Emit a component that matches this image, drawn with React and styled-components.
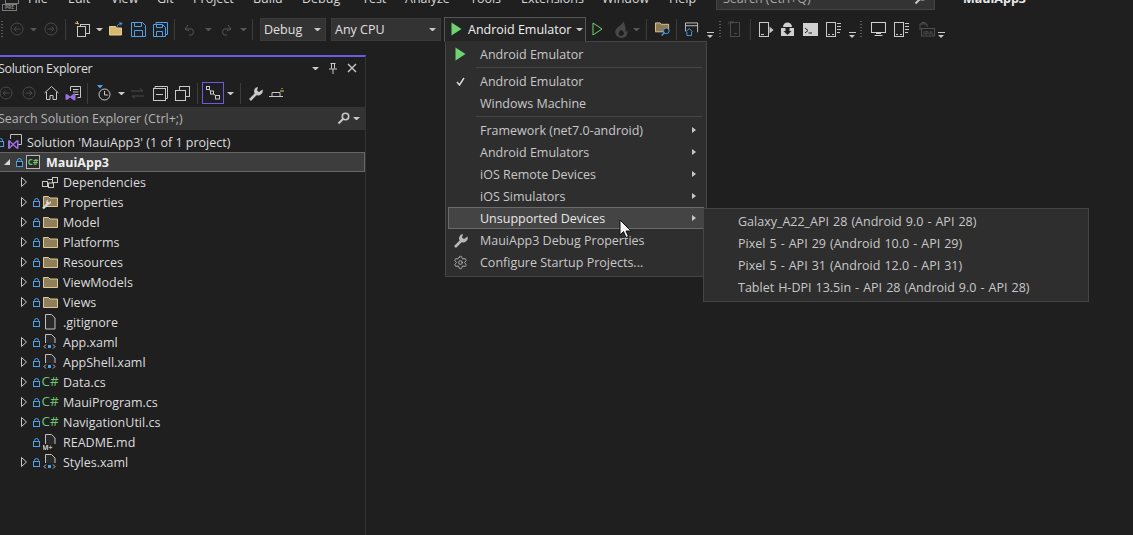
import React from "react";
import styled, { createGlobalStyle } from "styled-components";
import { Settings } from "lucide-react";

const GlobalStyle = createGlobalStyle`
  html, body { margin: 0; padding: 0; background: #1f1f1f; }
  * { box-sizing: border-box; }
`;

const FONT = `"Open Sans", "Noto Sans", sans-serif`;

const menus = [
  ["File", 40], ["Edit", 43], ["View", 46], ["Git", 36], ["Project", 60], ["Build", 49], ["Debug", 60],
  ["Test", 43], ["Analyze", 65], ["Tools", 51], ["Extensions", 81], ["Window", 67], ["Help", 48],
];

const tree = [
  { name: "Dependencies", icon: "deps", arrow: true, lock: false },
  { name: "Properties", icon: "propfolder", arrow: true, lock: true },
  { name: "Model", icon: "folder", arrow: true, lock: true },
  { name: "Platforms", icon: "folder", arrow: true, lock: true },
  { name: "Resources", icon: "folder", arrow: true, lock: true },
  { name: "ViewModels", icon: "folder", arrow: true, lock: true },
  { name: "Views", icon: "folder", arrow: true, lock: true },
  { name: ".gitignore", icon: "file", arrow: false, lock: true },
  { name: "App.xaml", icon: "xaml", arrow: true, lock: true },
  { name: "AppShell.xaml", icon: "xaml", arrow: true, lock: true },
  { name: "Data.cs", icon: "cs", arrow: true, lock: true },
  { name: "MauiProgram.cs", icon: "cs", arrow: true, lock: true },
  { name: "NavigationUtil.cs", icon: "cs", arrow: true, lock: true },
  { name: "README.md", icon: "md", arrow: false, lock: true },
  { name: "Styles.xaml", icon: "xaml", arrow: true, lock: true },
];

const devices = [
  "Galaxy_A22_API 28 (Android 9.0 - API 28)",
  "Pixel 5 - API 29 (Android 10.0 - API 29)",
  "Pixel 5 - API 31 (Android 12.0 - API 31)",
  "Tablet H-DPI 13.5in - API 28 (Android 9.0 - API 28)",
];

const Page = styled.div`
  position: relative;
  width: 1133px;
  height: 535px;
  overflow: hidden;
  background: #1f1f1f;
  font-family: ${FONT};
  font-size: 12.5px;
  color: #dcdcdc;
`;

const MenuBar = styled.div`
  display: flex;
  align-items: center;
  height: 24px;
  margin-top: -14px;
`;

const Logo = styled.div`
  width: 28px;
  flex: none;
  align-self: flex-end;
  padding-left: 2px;
  margin-bottom: -1px;
  &::before {
    content: "";
    display: block;
    width: 12px;
    height: 4px;
    margin-left: 3px;
    border: 1px solid #7a7a7a;
    border-top: none;
  }
`;

const PreBadge = styled.div`
  width: 15px;
  height: 7px;
  border: 1px solid #7a7a7a;
  font-size: 5px;
  line-height: 5px;
  font-weight: 700;
  text-align: center;
  color: #8a8a8a;
`;

const MenuName = styled.div`
  width: ${(p) => p.$w}px;
  flex: none;
  color: #d8d8d8;
`;

const QuickSearch = styled.div`
  display: flex;
  align-items: center;
  justify-content: space-between;
  width: 219px;
  height: 23px;
  margin-left: -1px;
  padding: 0 7px 0 6px;
  background: #333333;
  border: 1px solid #434343;
  color: #a8a8a8;
  flex: none;
`;

const ProjectName = styled.div`
  margin-left: 28px;
  font-weight: 700;
  color: #e8e8e8;
`;

const Toolbar = styled.div`
  display: flex;
  align-items: center;
  height: 26px;
  margin-top: 6px;
  padding-left: 1px;
`;

const Slot = styled.div`
  display: flex;
  align-items: center;
  justify-content: center;
  flex: none;
  width: ${(p) => p.$w}px;
  margin-left: ${(p) => p.$ml || 0}px;
`;

const Sep = styled.div`
  flex: none;
  width: 1px;
  height: 21px;
  background: #3c3c3c;
  margin-left: ${(p) => p.$ml || 0}px;
`;

const Gripper = styled.div`
  flex: none;
  width: 2px;
  height: 17px;
  margin-left: ${(p) => p.$ml || 0}px;
  background: repeating-linear-gradient(to bottom, #5a5a5a 0 1px, transparent 1px 3px);
`;

const Caret = styled.div`
  flex: none;
  width: 7px;
  height: 0;
  margin-left: ${(p) => p.$ml || 0}px;
  border-left: 3.5px solid transparent;
  border-right: 3.5px solid transparent;
  border-top: 3.5px solid ${(p) => (p.$dim ? "#555555" : "#c8c8c8")};
`;

const Overflow = styled.div`
  flex: none;
  width: 7px;
  height: 6px;
  margin-left: ${(p) => p.$ml || 0}px;
  margin-top: 12px;
  border-top: 1px solid #c8c8c8;
  position: relative;
  &::after {
    content: "";
    position: absolute;
    left: 0;
    top: 2px;
    border-left: 3.5px solid transparent;
    border-right: 3.5px solid transparent;
    border-top: 3.5px solid #c8c8c8;
  }
`;

const Select = styled.div`
  display: flex;
  align-items: center;
  justify-content: space-between;
  flex: none;
  width: ${(p) => p.$w}px;
  height: 23px;
  margin-left: ${(p) => p.$ml || 0}px;
  padding: 0 4px 0 3px;
  background: #333333;
  border: 1px solid #3a3a3a;
  color: #e0e0e0;
`;

const RunButton = styled.div`
  display: flex;
  align-items: center;
  flex: none;
  width: 142px;
  height: 25px;
  margin-left: 3px;
  padding: 0 2px 0 6px;
  border: 1px solid #555555;
  border-bottom-color: #2d2d2d;
  color: #f0f0f0;
  background: #242424;
  position: relative;
  z-index: 3;
  span {
    margin-left: 6px;
    flex: 1;
  }
`;

const Panel = styled.div`
  width: 372px;
  height: 480px;
  margin: 13px 0 0 -6px;
  border-top: 2px solid #6a5be2;
  border-right: 1px solid #333333;
`;

const PanelTitle = styled.div`
  display: flex;
  align-items: center;
  height: 22px;
  padding-left: 4px;
  color: #dcdcdc;
  letter-spacing: -0.35px;
`;

const TitleDots = styled.div`
  flex: 1;
  height: 5px;
  margin: 0 8px 0 8px;
  background-image: radial-gradient(#4a4a4a 0.6px, transparent 0.7px);
  background-size: 2px 2px;
`;

const TitleActions = styled.div`
  display: flex;
  align-items: center;
  gap: 9px;
  padding-right: 8px;
`;

const PanelTools = styled.div`
  display: flex;
  align-items: center;
  height: 28px;
  padding-left: 5px;
`;

const ActiveTool = styled.div`
  display: flex;
  align-items: center;
  justify-content: center;
  flex: none;
  width: 22px;
  height: 22px;
  margin-left: 4px;
  border: 1px solid #6a5be2;
`;

const SearchBar = styled.div`
  display: flex;
  align-items: center;
  justify-content: space-between;
  height: 23px;
  padding: 0 5px 0 4px;
  background: #333333;
  color: #b4b4b4;
`;

const SearchIcons = styled.div`
  display: flex;
  align-items: center;
  gap: 3px;
`;

const Tree = styled.div`
  padding-top: 2px;
`;

const Row = styled.div`
  display: flex;
  align-items: center;
  height: 20px;
  padding-left: ${(p) => p.$pad}px;
  ${(p) => p.$selected && `
    background: #3d3d3d;
    border: 1px solid #666666;
    border-left: none;
    font-weight: 700;
    color: #f0f0f0;
  `}
`;

const ArrowSlot = styled.div`
  display: flex;
  align-items: center;
  justify-content: center;
  flex: none;
  width: 13px;
`;

const LockSlot = styled.div`
  display: flex;
  justify-content: center;
  flex: none;
  width: 8px;
  margin-left: 2px;
`;

const FileIcon = styled.div`
  display: flex;
  align-items: center;
  justify-content: center;
  flex: none;
  width: 16px;
  margin-left: 2px;
`;

const RowLabel = styled.div`
  margin-left: 5px;
  white-space: nowrap;
`;

const CSharp = styled.div`
  font-size: 13.5px;
  font-weight: 400;
  color: #6fc46f;
  line-height: 1;
  margin-top: -1px;
`;

const ProjectBadge = styled.div`
  width: 14px;
  height: 14px;
  border: 1px solid #b8b8b8;
  background: #2b2b2b;
  font-size: 8px;
  line-height: 11px;
  font-weight: 700;
  text-align: center;
  color: #6fc46f;
`;

const Dropdown = styled.div`
  position: absolute;
  left: 445px;
  top: 41px;
  width: 262px;
  padding: 1px 2px 3px;
  background: #2e2e2e;
  border: 1px solid #454545;
  z-index: 2;
`;

const Flyout = styled.div`
  position: absolute;
  left: 703px;
  top: 208px;
  width: 386px;
  padding: 2px;
  background: #2e2e2e;
  border: 1px solid #454545;
  z-index: 4;
  word-spacing: 0.8px;
`;

const Item = styled.div`
  display: flex;
  align-items: center;
  height: 22px;
  border: 1px solid ${(p) => (p.$hover ? "#6a6a6a" : "transparent")};
  background: ${(p) => (p.$hover ? "#444444" : "transparent")};
  color: ${(p) => (p.$hover ? "#e6e6e6" : "#c8c8c8")};
`;

const ItemIcon = styled.div`
  display: flex;
  align-items: center;
  justify-content: center;
  flex: none;
  width: 23px;
  margin-right: 8px;
`;

const ItemText = styled.div`
  flex: 1;
  white-space: nowrap;
`;

const ItemArrow = styled.div`
  flex: none;
  width: 0;
  height: 0;
  margin-right: 7px;
  border-top: 3.5px solid transparent;
  border-bottom: 3.5px solid transparent;
  border-left: 4px solid #c8c8c8;
`;

const MenuSep = styled.div`
  height: 1px;
  margin: 2px 2px 2px 28px;
  background: #454545;
`;

const FlyItem = styled.div`
  height: 22px;
  line-height: 22px;
  padding-left: 32px;
  color: #c8c8c8;
  white-space: nowrap;
`;

const CursorWrap = styled.div`
  position: absolute;
  left: 619px;
  top: 219px;
  z-index: 5;
  line-height: 0;
`;

const Svg = ({ w = 16, h = 16, vb, children }) => (
  <svg width={w} height={h} viewBox={vb || `0 0 ${w} ${h}`} fill="none">{children}</svg>
);

const Play = ({ size = 11 }) => (
  <Svg w={size} h={size + 3} vb="0 0 11 14"><path d="M0.5 0.5 L10.5 7 L0.5 13.5 Z" fill="#6fd36f" /></Svg>
);

const CircleArrow = ({ right, c = "#4a4a4a" }) => (
  <Svg w={14} h={14}>
    <circle cx="7" cy="7" r="6" stroke={c} />
    <path d={right ? "M3.5 7H10M7.5 4.5 10 7 7.5 9.5" : "M10.5 7H4M6.5 4.5 4 7 6.5 9.5"} stroke={c} />
  </Svg>
);

const Lock = () => (
  <Svg w={7} h={9}>
    <path d="M1.5 3.5V2.5a2 2 0 0 1 4 0v1" stroke="#4ea1e8" />
    <rect x="0.5" y="3.5" width="6" height="5" stroke="#4ea1e8" fill="#1f1f1f" />
  </Svg>
);

const Chevron = () => (
  <Svg w={6} h={10}><path d="M0.5 0.5 L5.5 5 L0.5 9.5 Z" stroke="#c8c8c8" /></Svg>
);

const Folder = () => (
  <Svg w={15} h={12}>
    <path d="M0.5 1.5h5l1.5 1.5h7.5v8.5h-14z" fill="#907f5c" stroke="#e0c98e" />
  </Svg>
);

const Doc = ({ children }) => (
  <Svg w={14} h={16}>
    <path d="M2.5 .5h6l3.5 3.5v11h-9.5z" fill="#2a2a2a" stroke="#c0c0c0" />
    {children}
  </Svg>
);

const TreeIcon = ({ type }) => {
  if (type === "folder") return <Folder />;
  if (type === "propfolder") return (
    <Svg w={16} h={15}>
      <path d="M1.5 1.5h5l1.5 1.5h7.500v8.500h-14z" fill="#907f5c" stroke="#e0c98e" />
      <path d="M1 13.500 5.500 9" stroke="#d8d8d8" strokeWidth="2.4" />
      <path d="M5 9.500a3 3 0 0 1 1-5l-.5 2 1.500 1 2-1.500a3 3 0 0 1-4 3.500z" fill="#d8d8d8" />
    </Svg>
  );
  if (type === "cs") return <CSharp>C#</CSharp>;
  if (type === "file") return <Doc />;
  if (type === "md") return (
    <Doc>
      <rect x="0" y="10" width="13" height="6" fill="#1f1f1f" />
      <text x="-1" y="16" fontSize="7" fontWeight="700" fill="#c8c8c8" fontFamily={FONT}>M+</text>
    </Doc>
  );
  if (type === "xaml") return (
    <Doc><rect x="0" y="9" width="14" height="7" fill="#1f1f1f" /><rect x="5" y="11" width="3" height="3" fill="#4ea1e8" /><path d="M3 10.5 1 12.5 3 14.5M10 10.5 12 12.5 10 14.5" stroke="#c0c0c0" /></Doc>
  );
  return (
    <Svg w={16} h={12}>
      <rect x="0.5" y="5.5" width="5" height="5" stroke="#c8c8c8" />
      <rect x="10.5" y="1.5" width="5" height="5" stroke="#c8c8c8" />
      <rect x="6.5" y="7" width="5" height="4.5" stroke="#c8c8c8" />
      <path d="M5.5 3.5h5" stroke="#c8c8c8" />
    </Svg>
  );
};

const Wrench = ({ c = "#c8c8c8" }) => (
  <Svg w={15} h={15}>
    <path d="M2 14 8.5 7.5" stroke={c} strokeWidth="2.6" />
    <path d="M7.500 8.500a4.300 4.300 0 0 1 2.500-7.500L9 4.500l2 1.500 3.500-2.500a4.500 4.500 0 0 1-7 5z" fill={c} />
  </Svg>
);

const Magnifier = ({ c = "#c8c8c8" }) => (
  <Svg w={13} h={13}>
    <circle cx="8.5" cy="4.5" r="3.2" stroke={c} strokeWidth="1.6" />
    <path d="M6 7 1.5 11.5" stroke={c} strokeWidth="2" />
  </Svg>
);

const Device = ({ c = "#c8c8c8" }) => (
  <Svg w={15} h={15}>
    <rect x="0.5" y="0.5" width="9" height="14" stroke={c} />
    <path d="M2 12.5h2M6 12.5h2" stroke={c} />
    <path d="M11 1.5h4M11 4.5h4M11 7.5h4M11 10.5h3" stroke={c} strokeWidth="1.2" />
  </Svg>
);

const SolutionIcon = () => (
  <Svg w={15} h={16}>
    <path d="M3.5 5V.5h11v10h-4" stroke="#c0c0c0" />
    <path d="M1 6.5 2.5 6 6 9.5 10 6l1.5.6v7.8l-1.5.6-4-3.5L2.5 15 1 14.5z" fill="#9a6fe0" />
    <path d="M3 8.5v4L5 10.5z" fill="#1f1f1f" /><path d="M10 8v5L7 10.5z" fill="#1f1f1f" />
  </Svg>
);

export default function App() {
  return (
    <Page>
      <GlobalStyle />
      <MenuBar>
        <Logo><PreBadge>PRE</PreBadge></Logo>
        {menus.map(([name, w]) => (
          <MenuName key={name} $w={w}>{name}</MenuName>
        ))}
        <QuickSearch>Search (Ctrl+Q)<Magnifier /></QuickSearch>
        <ProjectName>MauiApp3</ProjectName>
      </MenuBar>

      <Toolbar>
        <Gripper />
        <Slot $w={14} $ml={7}><CircleArrow /></Slot>
        <Caret $dim $ml={6} />
        <Slot $w={14} $ml={7}><CircleArrow right /></Slot>
        <Sep $ml={7} />
        <Slot $w={16} $ml={8}>
          <Svg w={16} h={18}>
            <path d="M3 1 4 4M1 3l4 1" stroke="#e8c878" />
            <rect x="6.5" y="4.5" width="9" height="9" stroke="#c8c8c8" />
            <rect x="3.5" y="6.5" width="8" height="10" fill="#1f1f1f" stroke="#c8c8c8" />
          </Svg>
        </Slot>
        <Caret $ml={6} />
        <Slot $w={15} $ml={6}>
          <Svg w={15} h={14}>
            <path d="M.5 4.5h6l1 1.5h5v7H.5z" fill="#d9b872" stroke="#e8cf96" />
            <path d="M8 5c0-2 2-3.5 4.5-3.5M10.5.5 13 1.5 11 3.5" stroke="#4ea1e8" />
          </Svg>
        </Slot>
        <Slot $w={15} $ml={7}>
          <Svg w={15} h={15}>
            <path d="M.5.5h11l3 3v11H.5z" stroke="#4ea1e8" />
            <path d="M3.5.5v4h7v-4M3.5 14.5v-6h8v6" stroke="#4ea1e8" />
          </Svg>
        </Slot>
        <Slot $w={15} $ml={7}>
          <Svg w={15} h={15}>
            <path d="M3 2V.5h11.5v12H13" stroke="#4ea1e8" />
            <path d="M.5 2.5h9l3 3v9H.5z" stroke="#4ea1e8" />
            <path d="M3.5 2.5v3h6v-3M3.5 14.5v-5h6v5" stroke="#4ea1e8" />
          </Svg>
        </Slot>
        <Sep $ml={6} />
        <Slot $w={13} $ml={9}>
          <Svg w={13} h={13}><path d="M1 6h7a4 4 0 0 1 0 6H5M4 2 1 6l4 2" stroke="#555555" /></Svg>
        </Slot>
        <Caret $dim $ml={8} />
        <Slot $w={13} $ml={7}>
          <Svg w={13} h={13}><path d="M12 6H5a4 4 0 0 0 0 6h3M9 2l3 4-4 2" stroke="#555555" /></Svg>
        </Slot>
        <Caret $dim $ml={8} />
        <Sep $ml={5} />
        <Select $w={66} $ml={7}>Debug<Caret /></Select>
        <Select $w={110} $ml={5}>Any CPU<Caret /></Select>
        <RunButton>
          <Play /><span>Android Emulator</span><Caret />
        </RunButton>
        <Slot $w={11} $ml={6}>
          <Svg w={11} h={14}><path d="M1 1 10 7 1 13Z" stroke="#6fd36f" /></Svg>
        </Slot>
        <Slot $w={14} $ml={11}>
          <Svg w={14} h={17}>
            <path fillRule="evenodd" d="M9 0c1 3-5 5-7.500 9-1.500 4 2 8 6 8s6.500-3 6-8c-.5 1-1 1.500-2 2 .5-4-.5-8-2.500-11zM7 9c-2 1-3 3-2 5s5 1 5-2c0-1-1-2-3-3z" fill="#484848" />
          </Svg>
        </Slot>
        <Caret $dim $ml={5} />
        <Sep $ml={6} />
        <Slot $w={16} $ml={8}>
          <Svg w={17} h={16}>
            <path d="M.5 1.5h5l1 1.5h8v8H.5z" fill="#8a7a58" stroke="#e0c98e" />
            <circle cx="12" cy="10" r="3" fill="#1f1f1f" stroke="#4ea1e8" />
            <path d="M10 12 7 15" stroke="#4ea1e8" strokeWidth="1.4" />
          </Svg>
        </Slot>
        <Sep $ml={5} />
        <Slot $w={14} $ml={8}>
          <Svg w={15} h={16}>
            <path d="M.5 1.5h13v10M.5 1.5v9M.5 4.5h13" stroke="#c8c8c8" />
            <path d="M1 11 4.5 7.5 8 11M2 11v4h5v-4" stroke="#4ea1e8" />
          </Svg>
        </Slot>
        <Overflow $ml={8} />
        <Gripper $ml={5} />
        <Slot $w={13} $ml={6}>
          <Svg w={13} h={16}>
            <rect x="3.500" y="1.500" width="9" height="14" stroke="#4a4a4a" />
            <path d="M7 12.500h3" stroke="#4a4a4a" />
            <path d="M1 3.500a3 3 0 0 1 5-2M6 0v2H4" stroke="#4a4a4a" />
          </Svg>
        </Slot>
        <Sep $ml={10} />
        <Slot $w={15} $ml={8}>
          <Svg w={15} h={15}><rect x=".5" y=".5" width="9" height="14" stroke="#c8c8c8" /><path d="M2 12.5h3" stroke="#c8c8c8" /><path d="M10.5 4.5 14.5 8 10.5 11.500Z" fill="#c8c8c8" /></Svg>
        </Slot>
        <Slot $w={15} $ml={6}>
          <Svg w={15} h={15}>
            <path d="M3 5a4.500 4.500 0 0 1 9 0z" fill="#d0d0d0" />
            <path d="M1 6h13v8H1z" fill="#d0d0d0" />
            <path d="M5.500 6v3H3.500L7.500 13l4-4H9.500V6z" fill="#1f1f1f" />
          </Svg>
        </Slot>
        <Slot $w={15} $ml={8}>
          <Svg w={15} h={13}><rect width="15" height="13" fill="#d0d0d0" /><path d="M2 5 5 7.500 2 10M5.500 10H9" stroke="#1f1f1f" /></Svg>
        </Slot>
        <Slot $w={15} $ml={8}><Device /></Slot>
        <Overflow $ml={8} />
        <Gripper $ml={4} />
        <Slot $w={15} $ml={9}>
          <Svg w={15} h={14}><rect x=".5" y=".5" width="14" height="10" stroke="#d0d0d0" /><path d="M5 11.500h5M3.500 13.500h8" stroke="#d0d0d0" /></Svg>
        </Slot>
        <Slot $w={15} $ml={8}><Device /></Slot>
        <Slot $w={18} $ml={8}>
          <Svg w={18} h={15}>
            <path d="M3 8V2h7v3M5 2V.5h3V2" stroke="#505050" />
            <rect x="4.500" y="6.500" width="13" height="7.500" fill="#1f1f1f" stroke="#505050" />
            <text x="6" y="13" fontSize="6" fontWeight="700" fill="#505050" fontFamily={FONT}>IPA</text>
          </Svg>
        </Slot>
        <Overflow $ml={3} />
      </Toolbar>

      <Panel>
        <PanelTitle>
          Solution Explorer
          <TitleDots />
          <TitleActions>
            <Caret />
            <Svg w={10} h={11}><path d="M2.500.5h5M3.500.5v5M6.500.5v5M1 6h8M5 6v5" stroke="#c8c8c8" /></Svg>
            <Svg w={10} h={10}><path d="M1 1l8 8M9 1l-8 8" stroke="#c8c8c8" strokeWidth="1.4" /></Svg>
          </TitleActions>
        </PanelTitle>
        <PanelTools>
          <Slot $w={14}><CircleArrow /></Slot>
          <Slot $w={14} $ml={9}><CircleArrow right /></Slot>
          <Slot $w={15} $ml={8}>
            <Svg w={15} h={14}><path d="M.5 7 7.500.5 14.500 7M2.500 6v7.500h3.500v-4h3v4h3.500V6" stroke="#c8c8c8" /></Svg>
          </Slot>
          <Slot $w={16} $ml={6}>
            <Svg w={16} h={15}>
              <path d="M5.500 5V.5h10v11h-3" stroke="#c8c8c8" /><path d="M8 3.500h5.500M8 6h5.500M8 8.500h5.500" stroke="#c8c8c8" />
              <path d="M.5 8.500 2 8l3 2.500L9 7.500l1.500.5v6l-1.500.5-4-3L2 14 .5 13.500z" fill="#9a6fe0" />
            </Svg>
          </Slot>
          <Sep $ml={6} />
          <Slot $w={15} $ml={8}>
            <Svg w={15} h={16}>
              <path d="M1 0h6L4 3.500z" fill="#4ea1e8" />
              <circle cx="8.500" cy="9.500" r="5.500" stroke="#c8c8c8" />
              <path d="M8.500 6v4H12" stroke="#c8c8c8" />
            </Svg>
          </Slot>
          <Caret $ml={7} />
          <Slot $w={13} $ml={6}>
            <Svg w={13} h={11}><path d="M0 3h12M9 .5 12 3M13 8H1M4 10.500 1 8" stroke="#4a4a4a" /></Svg>
          </Slot>
          <Slot $w={15} $ml={9}>
            <Svg w={15} h={15}><path d="M2 2V.5h12.500v12H13" stroke="#c8c8c8" /><rect x=".5" y="2.500" width="12" height="12" stroke="#c8c8c8" /><path d="M3 8.500h7" stroke="#c8c8c8" /></Svg>
          </Slot>
          <Slot $w={15} $ml={7}>
            <Svg w={15} h={15}><rect x="4.500" y=".5" width="10" height="10" stroke="#c8c8c8" /><rect x=".5" y="4.500" width="10" height="10" fill="#1f1f1f" stroke="#c8c8c8" /></Svg>
          </Slot>
          <Sep $ml={7} />
          <ActiveTool>
            <Svg w={14} h={14}><rect x=".5" y=".5" width="3" height="3" stroke="#c8c8c8" /><rect x="4.500" y="5" width="3" height="3" stroke="#c8c8c8" /><rect x="9.500" y="9.500" width="4" height="3.500" stroke="#c8c8c8" /><path d="M3.500 3.500 4.500 5M7.500 8l2 1.500" stroke="#c8c8c8" /></Svg>
          </ActiveTool>
          <Caret $ml={3} />
          <Sep $ml={6} />
          <Slot $w={15} $ml={7}><Wrench /></Slot>
          <Slot $w={16} $ml={6}>
            <Svg w={16} h={10}><path d="M0 8.500h14M3 8V4.500h8V8" stroke="#c8c8c8" /><path d="M11 3h4M13 0v1" stroke="#e8c878" /></Svg>
          </Slot>
        </PanelTools>
        <SearchBar>
          Search Solution Explorer (Ctrl+;)
          <SearchIcons><Magnifier /><Caret /></SearchIcons>
        </SearchBar>
        <Tree>
          <Row $pad={0}>
            <LockSlot><Lock /></LockSlot>
            <FileIcon><SolutionIcon /></FileIcon>
            <RowLabel>Solution 'MauiApp3' (1 of 1 project)</RowLabel>
          </Row>
          <Row $pad={6} $selected>
            <ArrowSlot>
              <Svg w={6} h={6}><path d="M6 0v6H0z" fill="#d8d8d8" /></Svg>
            </ArrowSlot>
            <LockSlot><Lock /></LockSlot>
            <FileIcon><ProjectBadge>C#</ProjectBadge></FileIcon>
            <RowLabel>MauiApp3</RowLabel>
          </Row>
          {tree.map((t) => (
            <Row key={t.name} $pad={23}>
              <ArrowSlot>{t.arrow && <Chevron />}</ArrowSlot>
              <LockSlot>{t.lock && <Lock />}</LockSlot>
              <FileIcon><TreeIcon type={t.icon} /></FileIcon>
              <RowLabel>{t.name}</RowLabel>
            </Row>
          ))}
        </Tree>
      </Panel>

      <Dropdown>
        <Item>
          <ItemIcon><Play /></ItemIcon>
          <ItemText>Android Emulator</ItemText>
        </Item>
        <MenuSep />
        <Item>
          <ItemIcon><Svg w={9} h={9}><path d="M1 5l2.500 3L8 1" stroke="#d8d8d8" strokeWidth="1.500" /></Svg></ItemIcon>
          <ItemText>Android Emulator</ItemText>
        </Item>
        <Item><ItemIcon /><ItemText>Windows Machine</ItemText></Item>
        <MenuSep />
        <Item><ItemIcon /><ItemText>Framework (net7.0-android)</ItemText><ItemArrow /></Item>
        <Item><ItemIcon /><ItemText>Android Emulators</ItemText><ItemArrow /></Item>
        <Item><ItemIcon /><ItemText>iOS Remote Devices</ItemText><ItemArrow /></Item>
        <Item><ItemIcon /><ItemText>iOS Simulators</ItemText><ItemArrow /></Item>
        <Item $hover><ItemIcon /><ItemText>Unsupported Devices</ItemText><ItemArrow /></Item>
        <Item><ItemIcon><Wrench c="#b8b8b8" /></ItemIcon><ItemText>MauiApp3 Debug Properties</ItemText></Item>
        <Item><ItemIcon><Settings size={15} strokeWidth={1.4} color="#c0c0c0" /></ItemIcon><ItemText>Configure Startup Projects...</ItemText></Item>
      </Dropdown>

      <Flyout>
        {devices.map((d) => <FlyItem key={d}>{d}</FlyItem>)}
      </Flyout>

      <CursorWrap>
        <Svg w={13} h={20}>
          <path d="M1 1v15l3.500-3.500L7 18.500l2.500-1L7 12h5z" fill="#f4f4f4" stroke="#111111" />
        </Svg>
      </CursorWrap>
    </Page>
  );
}
